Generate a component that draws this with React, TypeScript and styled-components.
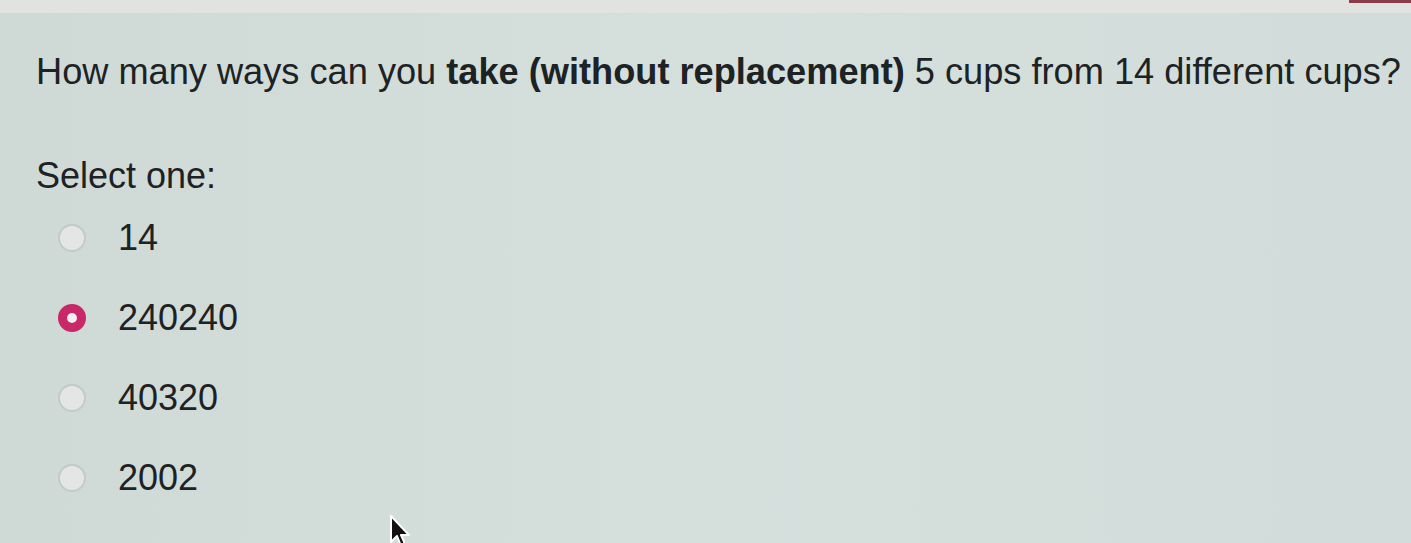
import React from "react";
import styled, { createGlobalStyle } from "styled-components";

const Global = createGlobalStyle`
  html, body { margin: 0; padding: 0; }
  body {
    width: 1411px;
    height: 543px;
    overflow: hidden;
    background: #d1dcd9;
    font-family: "Liberation Sans", Arial, sans-serif;
    color: #1d2224;
  }
`;

const Screen = styled.div`
  position: relative;
  width: 1411px;
  height: 543px;
  overflow: hidden;
  display: flex;
  flex-direction: column;
  background: linear-gradient(90deg, #cfdad7 0%, #d5dfdc 50%, #d2dddb 100%);
`;

const TopBand = styled.div`
  height: 13px;
  flex: none;
  background: #e0e3e0;
  display: flex;
  justify-content: flex-end;
`;

const AccentLine = styled.div`
  width: 62px;
  height: 3px;
  background: #8e3a48;
`;

const Content = styled.div`
  padding: 35px 0 0 36px;
  display: flex;
  flex-direction: column;
`;

const Question = styled.div`
  font-size: 36.2px;
  line-height: 48px;
  white-space: nowrap;
`;

const Bold = styled.strong`
  font-weight: 700;
`;

const Prompt = styled.div`
  margin-top: 57px;
  font-size: 36px;
  line-height: 46px;
`;

const Options = styled.div`
  display: flex;
  flex-direction: column;
  gap: 34px;
  margin-top: 16px;
  padding-left: 22px;
`;

const Option = styled.label`
  display: flex;
  align-items: center;
  gap: 32px;
  height: 46px;
  font-size: 36px;
`;

const Radio = styled.span<{ $checked?: boolean }>`
  width: 28px;
  height: 28px;
  border-radius: 50%;
  box-sizing: border-box;
  flex: none;
  background: ${(p) => (p.$checked ? "#f4eef0" : "#e3e6e4")};
  border: ${(p) => (p.$checked ? "9px solid #c92868" : "2px solid #c3cbc9")};
`;

const Cursor = styled.svg`
  position: absolute;
  left: 389px;
  top: 514px;
`;

const options = [
  { label: "14", checked: false },
  { label: "240240", checked: true },
  { label: "40320", checked: false },
  { label: "2002", checked: false },
];

export default function App() {
  return (
    <>
      <Global />
      <Screen>
        <TopBand>
          <AccentLine />
        </TopBand>
        <Content>
          <Question>
            How many ways can you <Bold>take (without replacement)</Bold> 5 cups from 14 different cups?
          </Question>
          <Prompt>Select one:</Prompt>
          <Options>
            {options.map((o) => (
              <Option key={o.label}>
                <Radio $checked={o.checked} />
                {o.label}
              </Option>
            ))}
          </Options>
        </Content>
        <Cursor width="24" height="34" viewBox="0 0 24 34">
          <path d="M2 2 L2 28 L8 22 L12 32 L16 30 L12 21 L20 21 Z" fill="#111" stroke="#fff" strokeWidth="2" strokeLinejoin="round" />
        </Cursor>
      </Screen>
    </>
  );
}
